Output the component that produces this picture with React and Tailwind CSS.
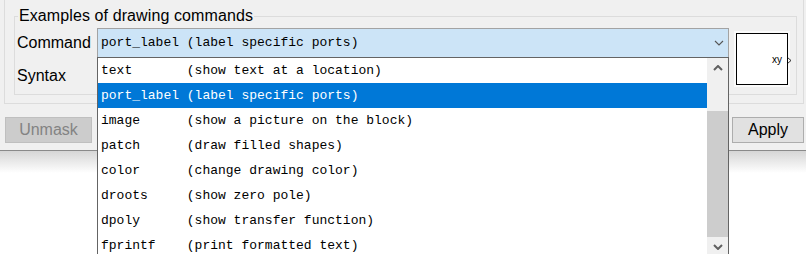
const commands = [
  ['text', '(show text at a location)'],
  ['port_label', '(label specific ports)'],
  ['image', '(show a picture on the block)'],
  ['patch', '(draw filled shapes)'],
  ['color', '(change drawing color)'],
  ['droots', '(show zero pole)'],
  ['dpoly', '(show transfer function)'],
  ['fprintf', '(print formatted text)'],
];

const Chevron = ({ up = false, weight = 1.6, className = '' }) => (
  <svg width="10" height="6" viewBox="0 0 10 6" className={className}>
    <polyline
      points={up ? '1,5 5,1 9,5' : '1,1 5,5 9,1'}
      fill="none"
      stroke="currentColor"
      strokeWidth={weight}
    />
  </svg>
);

const App = () => {
  const selected = 'port_label';

  return (
    <div className="relative w-[806px] h-[254px] overflow-hidden bg-white text-[16px] text-black font-['Liberation_Sans',Arial,sans-serif]">
      {/* Dialog window */}
      <div className="h-[151px] bg-[#f0f0f0] border-b border-[#8a8a8a] flex flex-col">
        <div className="ml-[4px] w-[800px] h-[104px] border-x border-b border-[#dcdcdc] pt-[7px] pl-[9px] pr-[6px]">
          <fieldset className="h-[88px] border border-[#dcdcdc]">
            <legend className="ml-[3px] px-[1px] leading-[18px] tracking-[0.1px]">Examples of drawing commands</legend>
            <div className="flex">
              <div className="flex flex-col">
                <div className="mt-[3px] h-[30px] flex items-center">
                  <div className="w-[82px] pl-[2px]">Command</div>
                  <div className="w-[632px] h-[30px] border border-[#a3a3a3] bg-[#cce4f7] flex items-center justify-between pl-[3px] pr-[4px]">
                    <span className="whitespace-pre text-[13px] font-['Liberation_Mono',monospace]">
                      port_label (label specific ports)
                    </span>
                    <Chevron weight={1.1} className="text-[#555555]" />
                  </div>
                </div>
                <div className="h-[35px] flex items-center pl-[2px]">Syntax</div>
              </div>

              {/* Block preview */}
              <div className="ml-[5px] mt-[6px] w-[56px] h-[56px] bg-[#fbfbfb] p-[2px]">
                <div className="relative w-[52px] h-[52px] border border-black bg-white">
                  <span className="absolute left-[35px] top-[20px] text-[10px] leading-[12px]">xy</span>
                  <svg width="5" height="7" viewBox="0 0 5 7" className="absolute left-[50px] top-[23px]">
                    <polyline points="0.5,0.5 4,3.5 0.5,6.5" fill="none" stroke="#000" strokeWidth="0.8" />
                  </svg>
                </div>
              </div>
            </div>
          </fieldset>
        </div>

        <div className="mt-[13px] flex justify-between pl-[5px] pr-[2px]">
          <button className="w-[87px] h-[26px] border border-[#bfbfbf] bg-[#cccccc] text-[#838383] flex items-center justify-center">
            Unmask
          </button>
          <button className="w-[72px] h-[26px] border border-[#adadad] bg-[#e1e1e1] flex items-center justify-center">
            Apply
          </button>
        </div>
      </div>
      <div className="h-[22px] bg-linear-to-b from-[#d6d6d6] to-white" />

      {/* Open dropdown list */}
      <div className="absolute left-[97px] top-[57px] w-[632px] h-[201px] border border-[#646464] bg-white flex">
        <div className="w-[609px] flex flex-col">
          {commands.map(([name, desc]) => (
            <div
              key={name}
              className={`h-[25px] shrink-0 flex items-center pl-[3px] whitespace-pre text-[13px] font-['Liberation_Mono',monospace] ${
                name === selected ? 'bg-[#0078d7] text-white' : 'text-black'
              }`}
            >
              {name.padEnd(11, ' ') + desc}
            </div>
          ))}
        </div>
        <div className="w-[21px] bg-[#f0f0f0] flex flex-col">
          <div className="h-[20px] shrink-0 flex items-center justify-center text-[#606060]">
            <Chevron up weight={2} />
          </div>
          <div className="h-[33px] shrink-0" />
          <div className="h-[126px] shrink-0 bg-[#cdcdcd]" />
          <div className="h-[20px] shrink-0 flex items-center justify-center text-[#606060]">
            <Chevron weight={2} />
          </div>
        </div>
      </div>
    </div>
  );
};

export default App;
